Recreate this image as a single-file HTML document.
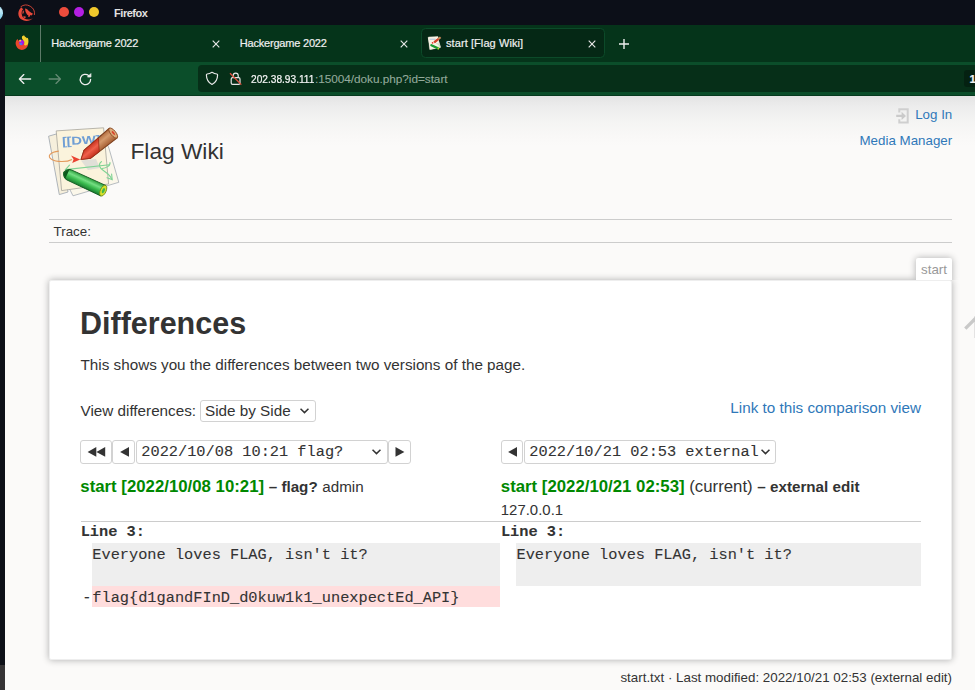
<!DOCTYPE html>
<html>
<head>
<meta charset="utf-8">
<title>start [Flag Wiki]</title>
<style>
html,body{margin:0;padding:0;}
body{width:975px;height:690px;overflow:hidden;position:relative;background:#fbfaf9;font-family:"Liberation Sans",sans-serif;font-size:15.26px;color:#333;}
.abs{position:absolute;}
/* desktop strip */
#strip{left:0;top:0;width:5px;height:690px;background:#0d1018;}
#strip2{left:0;top:665px;width:5px;height:25px;background:#353335;}
/* window chrome */
#titlebar{left:0;top:0;width:975px;height:25px;background:#0c0f18;}
#tabbar{left:5px;top:24.7px;width:970px;height:37.3px;background:#05341a;}
#navbar{left:5px;top:62px;width:970px;height:33.5px;background:#0b4e2a;}
#navline{left:5px;top:94.5px;width:970px;height:1px;background:#063a1e;}
#urlbar{left:198px;top:65px;width:800px;height:27px;background:#062f18;border-radius:4px;}
.chrometxt{font-size:11px;color:#f0f0f0;white-space:pre;line-height:14px;-webkit-text-stroke:.2px #f0f0f0;}
.tabtxt{letter-spacing:-.2px;}
#acttab{left:421.2px;top:28.3px;width:184.3px;height:29.7px;box-sizing:border-box;background:#052815;border:1.2px solid #0c4a29;border-radius:4.5px;}
/* page */
#pagegrad{left:5px;top:95.5px;width:970px;height:50px;background:linear-gradient(#e4e4e4 0px,#ececec 10px,#f4f4f3 25px,#f9f8f7 40px,#fbfaf9 50px);}
a{color:#2f78b9;text-decoration:none;}
.line{height:1px;background:#ccc;left:48.5px;width:903.5px;}
#page{left:48.5px;top:280px;width:903.5px;height:379.5px;box-sizing:border-box;background:#fff;border:1px solid #eee;border-radius:2px;box-shadow:0 0 7.6px #adadad;}
#pagetab{left:916px;top:258.3px;width:36px;height:23px;background:#fff;border-radius:2px 2px 0 0;box-shadow:0 0 7.6px #adadad;clip-path:inset(-10px -10px 1.3px -10px);}
#pagetabcover{left:915px;top:279.5px;width:36px;height:6px;background:#fff;}
.t{white-space:pre;line-height:1;}
.mono{font-family:"Liberation Mono",monospace;font-size:15.31px;-webkit-text-stroke:.1px #333;}
.btn{box-sizing:border-box;border:1.2px solid #d2d2d2;border-radius:3px;background:#fff;height:23.6px;top:440.1px;}
.tri{width:0;height:0;border-style:solid;position:absolute;}
.green{color:#080;font-weight:bold;font-size:16.79px;}
</style>
</head>
<body>
<!-- chrome -->
<div class="abs" id="titlebar"></div>
<div class="abs" id="tabbar"></div>
<div class="abs" id="navbar"></div>
<div class="abs" id="navline"></div>
<div class="abs" id="urlbar"></div>
<div class="abs" id="acttab"></div>
<div class="abs" id="strip"></div>
<div class="abs" id="strip2"></div>

<!-- titlebar items -->
<div class="abs" style="left:-13.5px;top:4.5px;width:16.5px;height:16px;border-radius:50%;background:radial-gradient(circle at 85% 35%,#c6ecfa,#7acbea 50%,#58b4de);"></div>
<svg class="abs" style="left:17px;top:3px" width="20" height="19" viewBox="17 3 20 19"><g filter="url(#kblur)"><defs><filter id="kblur"><feGaussianBlur stdDeviation=".25"/></filter></defs>
<path d="M20.6 6.9 A8.6 8.6 0 0 1 34.4 15" fill="none" stroke="#e8493a" stroke-width=".85"/>
<path d="M21.6 7.2 C17.4 10 17.2 16.8 21.6 19.6 C25.2 21.8 30.4 21.2 32.9 17.9 C30.4 19.8 26.8 19.9 24.2 18.2 C23 17.4 22.2 16.4 22 15.2 C21.2 13 21.6 10.6 23.4 9 C22.4 8.8 22 8.2 21.6 7.2 Z" fill="#e8493a"/>
<path d="M25 8.6 C26.6 8.8 27.8 9.8 28.8 10.9 C30.2 12 31.6 12.8 33 13.8 L31.6 15.4 L30.4 15 L29.6 16.8 L28.2 17 L28.4 15.4 C27.4 15 26.6 14.2 26.2 13 C25.4 11.8 25.2 10.2 25 8.6 Z" fill="#e8493a"/>
<path d="M23.2 10.2 C22.4 11.4 22.2 13 22.8 14.2 L23.8 12.6 C24 11.6 23.8 10.8 23.2 10.2 Z" fill="#e8493a"/>
<path d="M23 16.6 L25.4 16.2 L25.8 17.8 L24 17.9 Z" fill="#e8493a"/>
</g></svg>
<div class="abs" style="left:58.7px;top:7.3px;width:10px;height:10px;border-radius:50%;background:#ed4c3c;"></div>
<div class="abs" style="left:73.8px;top:7.3px;width:10px;height:10px;border-radius:50%;background:#b41fe3;"></div>
<div class="abs" style="left:88.8px;top:7.3px;width:10px;height:10px;border-radius:50%;background:#f0c82c;"></div>
<div class="abs chrometxt" style="left:114px;top:5.5px;font-weight:bold;font-size:11px;color:#e2e2e2;letter-spacing:-.45px;-webkit-text-stroke:0;">Firefox</div>

<!-- tabbar items -->
<svg class="abs" style="left:13.9px;top:35.3px" width="15.6" height="15.6" viewBox="0 0 14 14"><path d="M7 13.4 A5.9 5.9 0 0 1 3 3.6 L4.4 5.4 L7 5 L12.6 6 C13.4 10 10.6 13.4 7 13.4 Z" fill="#e8472c"/><path d="M7.2 1.4 C7.8 0.6 8.6 0.4 9 0.2 C9.6 1.4 11 2 11.6 3 L12.4 2.4 C13.2 4.4 13.2 6.6 12.4 8.4 C11.4 9.8 9.6 9.6 9 8.6 C9.6 7.4 9.4 6.2 8.6 5.4 C8 4.4 6.6 3.2 7.2 1.4Z" fill="#f3cf2e"/><path d="M4.6 4.6 C6 3.8 8 4.2 8.8 5.6 C9.4 6.8 9 8.4 7.8 9 C6.4 9.6 5 8.8 4.8 7.6 Z" fill="#a316e8"/><path d="M4.6 7.4 L6.8 7 L7.4 8.6 C6.4 9.4 5 9 4.6 7.4Z" fill="#4a7bf0"/><path d="M4.6 4.6 L6.2 4.2 L6.6 5.6 L5 6 Z" fill="#f3cf2e"/></svg>
<div class="abs" style="left:40px;top:25px;width:1px;height:37px;background:#5d7a68;"></div>
<div class="abs chrometxt tabtxt" style="left:51.3px;top:35.7px;">Hackergame 2022</div>
<div class="abs chrometxt tabtxt" style="left:239.8px;top:35.7px;">Hackergame 2022</div>
<div class="abs chrometxt" style="left:446px;top:35.7px;letter-spacing:.08px;">start [Flag Wiki]</div>
<svg class="abs" style="left:210.8px;top:38.7px" width="10" height="10" viewBox="0 0 10 10"><path d="M1.7 1.7 L8.3 8.3 M8.3 1.7 L1.7 8.3" stroke="#e6e6e6" stroke-width="1.15" fill="none"/></svg>
<svg class="abs" style="left:399.4px;top:38.7px" width="10" height="10" viewBox="0 0 10 10"><path d="M1.7 1.7 L8.3 8.3 M8.3 1.7 L1.7 8.3" stroke="#e6e6e6" stroke-width="1.15" fill="none"/></svg>
<svg class="abs" style="left:587.3px;top:38.5px" width="10" height="10" viewBox="0 0 10 10"><path d="M1.7 1.7 L8.3 8.3 M8.3 1.7 L1.7 8.3" stroke="#e6e6e6" stroke-width="1.15" fill="none"/></svg>
<svg class="abs" style="left:618px;top:38px" width="12" height="12" viewBox="0 0 12 12"><path d="M6 1 V11 M1 6 H11" stroke="#eee" stroke-width="1.4" fill="none"/></svg>
<!-- favicon for active tab -->
<svg class="abs" style="left:427px;top:36px" width="15" height="15" viewBox="0 0 15 15"><g filter="url(#fblur)"><defs><filter id="fblur"><feGaussianBlur stdDeviation=".3"/></filter></defs>
<path d="M0.8 1.6 L10.6 0.8 L14 11.6 L3.2 13.8 Z" fill="#f6f1e4"/>
<path d="M1.4 1 L11 0.6 L12.4 12 L2.6 13.4 Z" fill="#fbf5e6" stroke="#d8d4c8" stroke-width=".4"/>
<path d="M2.6 3.2 H8.6" stroke="#9fb6d6" stroke-width=".9"/>
<path d="M13.6 1.2 L7.2 6.4" stroke="#c98a5a" stroke-width="2.1"/>
<path d="M11.4 3 L7.2 6.4" stroke="#d8402b" stroke-width="2.1"/>
<circle cx="5.6" cy="6.8" r=".9" fill="#e8352a"/>
<path d="M4.4 9.2 L11 12.4" stroke="#1d9a32" stroke-width="2.3" stroke-linecap="round"/>
<circle cx="11.4" cy="12.5" r=".9" fill="#b9d62a"/>
<path d="M9.4 7.6 L12.4 8.4 M12 10.4 L12.6 8.6" stroke="#8fd49c" stroke-width=".6" fill="none"/>
</g></svg>

<!-- navbar items -->
<svg class="abs" style="left:18px;top:72px" width="14" height="14" viewBox="0 0 14 14"><path d="M12.6 7 H1.6 M5.8 2.6 L1.4 7 L5.8 11.4" stroke="#eee" stroke-width="1.35" fill="none" stroke-linecap="round" stroke-linejoin="round"/></svg>
<svg class="abs" style="left:47.7px;top:72px" width="14" height="14" viewBox="0 0 14 14"><path d="M1.2 7 H12.2 M8 2.6 L12.4 7 L8 11.4" stroke="#648a73" stroke-width="1.35" fill="none" stroke-linecap="round" stroke-linejoin="round"/></svg>
<svg class="abs" style="left:78px;top:72px" width="15" height="15" viewBox="0 0 15 15"><path d="M12.6 7.5 A5.2 5.2 0 1 1 10.6 3.4" stroke="#eee" stroke-width="1.3" fill="none" stroke-linecap="round"/><path d="M12.9 1.6 V5 H9.5 Z" fill="#eee" stroke="#eee" stroke-width=".8" stroke-linejoin="round"/></svg>
<svg class="abs" style="left:205px;top:70.7px" width="14" height="15" viewBox="0 0 14 15"><path d="M7 1.3 C5.4 2.3 3.6 2.9 2.2 3 C1.6 3.1 1.4 3.4 1.4 4 C1.5 8.4 3.2 11.6 7 13.5 C10.8 11.6 12.5 8.4 12.6 4 C12.6 3.4 12.4 3.1 11.8 3 C10.4 2.9 8.6 2.3 7 1.3 Z" stroke="#e8e8e8" stroke-width="1.2" fill="none" stroke-linejoin="round"/></svg>
<svg class="abs" style="left:228.6px;top:70.6px" width="14" height="15" viewBox="0 0 14 15"><rect x="2.2" y="6.6" width="8.8" height="6.8" rx="1.4" stroke="#e8e8e8" stroke-width="1.2" fill="none"/><path d="M4.2 6.6 V4.6 A2.5 2.5 0 0 1 9.2 4.6 V6.6" stroke="#e8e8e8" stroke-width="1.2" fill="none"/><path d="M1 2.3 L12.3 13.6" stroke="#e5503f" stroke-width="1.25"/></svg>
<div class="abs chrometxt" style="left:250.5px;top:71.6px;font-size:11.8px;-webkit-text-stroke:.22px #f6f6f6;color:#f6f6f6;transform:scaleX(.86);transform-origin:0 0;">202.38.93.111</div>
<div class="abs chrometxt" style="left:315px;top:71.6px;font-size:11.8px;letter-spacing:-.04px;color:#93aa9b;-webkit-text-stroke:.1px #93aa9b;">:15004/doku.php?id=start</div>
<div class="abs" style="left:964px;top:70px;width:30px;height:16.5px;border-radius:3px;background:#042111;"></div>
<div class="abs chrometxt" style="left:969.5px;top:72.3px;font-size:11.4px;font-weight:bold;">120%</div>

<!-- page -->
<div class="abs" id="pagegrad"></div>

<!-- logo placeholder -->
<svg class="abs" id="logo" style="left:44px;top:122px" width="80" height="80" viewBox="0 0 80 80" filter="url(#lblur)">
<defs><filter id="lblur" x="-5%" y="-5%" width="110%" height="110%"><feGaussianBlur stdDeviation=".3"/></filter><linearGradient id="gmk" x1="0" y1="0" x2="0" y2="1"><stop offset="0" stop-color="#2a9c3c"/><stop offset=".35" stop-color="#74de82"/><stop offset=".62" stop-color="#3cbc50"/><stop offset="1" stop-color="#187a2e"/></linearGradient>
<linearGradient id="gpn" x1="0" y1="0" x2="0" y2="1"><stop offset="0" stop-color="#b06a3c"/><stop offset=".4" stop-color="#d59a6c"/><stop offset="1" stop-color="#a45c30"/></linearGradient>
<linearGradient id="grd" x1="0" y1="0" x2="0" y2="1"><stop offset="0" stop-color="#c8321f"/><stop offset=".45" stop-color="#f0604a"/><stop offset="1" stop-color="#c2301c"/></linearGradient></defs>
<g stroke-linejoin="round">
<!-- rear-left sheet (CCW) -->
<path d="M4.6 14.2 L13 11.8 L24 70 L15.3 72.6 Z" fill="#f6efdc" stroke="#9aa3ad" stroke-width=".8"/>
<!-- rear-right sheet (CW) -->
<path d="M58 9 L65 26.5 L74.8 60.3 L29 73.8 L22 60 Z" fill="#fbf7ea" stroke="#a3abb3" stroke-width=".8"/>
<!-- front sheet -->
<path d="M12.2 8.9 L59.6 5.8 L64.6 62 L17.6 68.6 Z" fill="#fbf3dc" stroke="#a7a59c" stroke-width=".8"/>
</g>
<text x="0" y="0" font-family="Liberation Sans, sans-serif" font-weight="bold" font-size="11.4" fill="#6f9ed4" transform="translate(18.2 23.2) rotate(-3) scale(1.3 1)" letter-spacing="-.2">[[DW]]</text>
<!-- shadow under pencil -->
<path d="M37 38.5 L52 37 L56 46 L44 48 Z" fill="#d9d9d6" opacity=".8"/>
<!-- light green arrows -->
<g fill="none" stroke="#7fd394" stroke-width="1.1" stroke-linecap="round">
<path d="M21.5 47.6 L65.5 42.8"/>
<path d="M21.2 47.8 L25.5 43.2 M21.2 47.8 L27 48.4"/>
<path d="M57.5 39.6 C54 42 55 46 60 49 C63 51 66.5 54 67.8 57.2"/>
<path d="M66 40.5 C66.5 44 62 46 58 46.5"/>
<path d="M63 55.8 L68.2 57.6 L67.6 52"/>
</g>
<!-- orange ellipse arrow -->
<path d="M14.8 29.1 A12.6 5.3 0 1 0 28 37.4" fill="none" stroke="#e39a5c" stroke-width="1.1"/>
<path d="M27 33.6 L36.2 37.4 L28.2 41 L29.6 37.2 Z" fill="#ea4330"/>
<!-- red pencil -->
<g transform="translate(37.1 37.4) rotate(-39.3)">
<path d="M0 0 L8 -5.2 L41.5 -6.2 L41.5 6.2 L8 5.2 Z" fill="url(#gpn)" stroke="#7d3f1d" stroke-width="1"/>
<path d="M0 0 L8 -5.2 L27 -5.7 L19 5.5 L8 5.2 Z" fill="url(#grd)" stroke="#a22a18" stroke-width=".8"/>
<ellipse cx="41.5" cy="0" rx="2.6" ry="6.2" fill="#dca978" stroke="#8b4a22" stroke-width=".9"/>
<ellipse cx="41.7" cy="0" rx=".9" ry="2.4" fill="#d9402b"/>
</g>
<!-- green marker -->
<g transform="translate(19.7 50.4) rotate(24.8)">
<path d="M0 0 C1 -3.2 3 -5.4 6.5 -5.5 L43.5 -5.8 L43.5 5.8 L6.5 5.5 C3 5.4 1 3.2 0 0 Z" fill="url(#gmk)" stroke="#0f5a1e" stroke-width="1"/>
<path d="M0.3 0 C1 -2.2 2.2 -4 4 -4.8 L4 4.8 C2.2 4 1 2.2 0.3 0Z" fill="#0f5a1e"/>
<ellipse cx="43.5" cy="0" rx="2.9" ry="5.8" fill="#d9e22c" stroke="#6a8a14" stroke-width=".8"/>
<ellipse cx="43.7" cy="0" rx="1.3" ry="2.8" fill="#3fb84c"/>
</g>
</svg>

<div class="abs t" style="left:130.5px;top:139.7px;font-size:22.7px;">Flag Wiki</div>

<svg class="abs" style="left:895px;top:106.5px" width="16" height="18" viewBox="0 0 16 18"><path d="M4.3 5.4 V2.2 H12.7 V15.4 H4.3 V12.2" stroke="#cfcfcf" stroke-width="2" fill="none"/><path d="M1.2 7.7 H6.6 V4.8 L11 8.9 L6.6 13 V10.1 H1.2 Z" fill="#cacaca"/></svg>
<div class="abs t" style="left:915.2px;top:108.1px;font-size:13.35px;"><a>Log In</a></div>
<div class="abs t" style="right:22.8px;top:133.5px;font-size:13.35px;"><a>Media Manager</a></div>

<div class="abs line" style="top:219px;"></div>
<div class="abs line" style="top:242px;"></div>
<div class="abs t" style="left:53.6px;top:225.1px;font-size:13.35px;">Trace:</div>

<div class="abs" id="page"></div>
<div class="abs" id="pagetab"></div>
<div class="abs t" style="left:921px;top:262.9px;font-size:13.35px;color:#999;">start</div>

<!-- to-top arrow -->
<svg class="abs" style="left:960px;top:310px" width="15" height="28" viewBox="960 310 15 28"><path d="M965.3 328.6 L978 315.9 M976.2 316 V340" stroke="#c9c9c9" stroke-width="3.3" fill="none"/></svg>

<!-- content -->
<div class="abs t" style="left:80px;top:307.7px;font-size:30.5px;font-weight:bold;">Differences</div>
<div class="abs t" style="left:80.5px;top:357.1px;">This shows you the differences between two versions of the page.</div>
<div class="abs t" style="left:80.5px;top:402.9px;">View differences:</div>
<div class="abs" style="left:200px;top:400px;width:116.2px;height:22px;box-sizing:border-box;border:1.2px solid #d2d2d2;border-radius:3px;background:#fff;"></div>
<div class="abs t" style="left:205px;top:402.9px;">Side by Side</div>
<svg class="abs" style="left:299.3px;top:406.2px" width="11" height="10" viewBox="0 0 10 9"><path d="M1.4 2.4 L5 6 L8.6 2.4" stroke="#333" stroke-width="1.35" fill="none"/></svg>
<div class="abs t" style="right:54px;top:400.3px;"><a>Link to this comparison view</a></div>

<!-- left nav -->
<div class="abs btn" style="left:80.2px;width:31.8px;"></div>
<div class="abs btn" style="left:112.4px;width:22.9px;"></div>
<div class="abs btn" style="left:135.5px;width:252.4px;"></div>
<div class="abs btn" style="left:387.8px;width:23px;"></div>
<svg class="abs" style="left:86px;top:446px" width="22" height="12" viewBox="0 0 22 12"><path d="M1.6 5.9 L10.3 1 V10.8 Z M10.4 5.9 L19.2 1 V10.8 Z" fill="#333"/></svg>
<svg class="abs" style="left:118.5px;top:446px" width="12" height="12" viewBox="0 0 12 12"><path d="M1.1 5.9 L10 1 V10.8 Z" fill="#333"/></svg>
<svg class="abs" style="left:394px;top:446px" width="12" height="12" viewBox="0 0 12 12"><path d="M10.4 5.9 L1.5 1 V10.8 Z" fill="#333"/></svg>
<div class="abs t mono" style="left:141.3px;top:445px;">2022/10/08 10:21 flag?</div>
<svg class="abs" style="left:371.2px;top:447.2px" width="11" height="10" viewBox="0 0 10 9"><path d="M1.4 2.4 L5 6 L8.6 2.4" stroke="#333" stroke-width="1.35" fill="none"/></svg>

<!-- right nav -->
<div class="abs btn" style="left:500.6px;width:22.8px;"></div>
<div class="abs btn" style="left:523.8px;width:252.2px;"></div>
<svg class="abs" style="left:506.5px;top:446px" width="12" height="12" viewBox="0 0 12 12"><path d="M1.1 5.9 L10 1 V10.8 Z" fill="#333"/></svg>
<div class="abs t mono" style="left:529.3px;top:445px;">2022/10/21 02:53 external</div>
<svg class="abs" style="left:759.7px;top:447.2px" width="11" height="10" viewBox="0 0 10 9"><path d="M1.4 2.4 L5 6 L8.6 2.4" stroke="#333" stroke-width="1.35" fill="none"/></svg>

<!-- headers -->
<div class="abs t" style="left:80.3px;top:478.8px;font-size:16.79px;"><span class="green">start [2022/10/08 10:21]</span><span style="font-size:16.6px;"> <b style="font-size:15.2px;">– flag?</b> <span style="font-size:15.2px;">admin</span></span></div>
<div class="abs t" style="left:500.8px;top:478.8px;font-size:16.79px;"><span class="green">start [2022/10/21 02:53]</span><span style="font-size:16.8px;"> (current) <b style="font-size:15.2px;">– external edit</b></span></div>
<div class="abs t" style="left:500.8px;top:503px;font-size:14.94px;">127.0.0.1</div>

<div class="abs" style="left:80.5px;top:521px;width:840.5px;height:1px;background:#ccc;"></div>
<div class="abs t mono" style="left:80.7px;top:525.4px;font-weight:bold;">Line 3:</div>
<div class="abs t mono" style="left:500.9px;top:525.4px;font-weight:bold;">Line 3:</div>

<div class="abs" style="left:92px;top:543px;width:408px;height:43px;background:#eee;"></div>
<div class="abs" style="left:515.8px;top:543px;width:405.2px;height:43px;background:#eee;"></div>
<div class="abs" style="left:92px;top:586px;width:408px;height:21.3px;background:#fdd;"></div>
<div class="abs t mono" style="left:92.3px;top:547.7px;">Everyone loves FLAG, isn't it?</div>
<div class="abs t mono" style="left:516.5px;top:547.7px;">Everyone loves FLAG, isn't it?</div>
<div class="abs t mono" style="left:92.3px;top:590.7px;">flag{d1gandFInD_d0kuw1k1_unexpectEd_API}</div>
<div class="abs t mono" style="left:82.3px;top:590.8px;">-</div>

<!-- footer -->
<div class="abs t" style="right:23px;top:671.2px;font-size:13.35px;">start.txt · Last modified: 2022/10/21 02:53 (external edit)</div>
</body>
</html>
